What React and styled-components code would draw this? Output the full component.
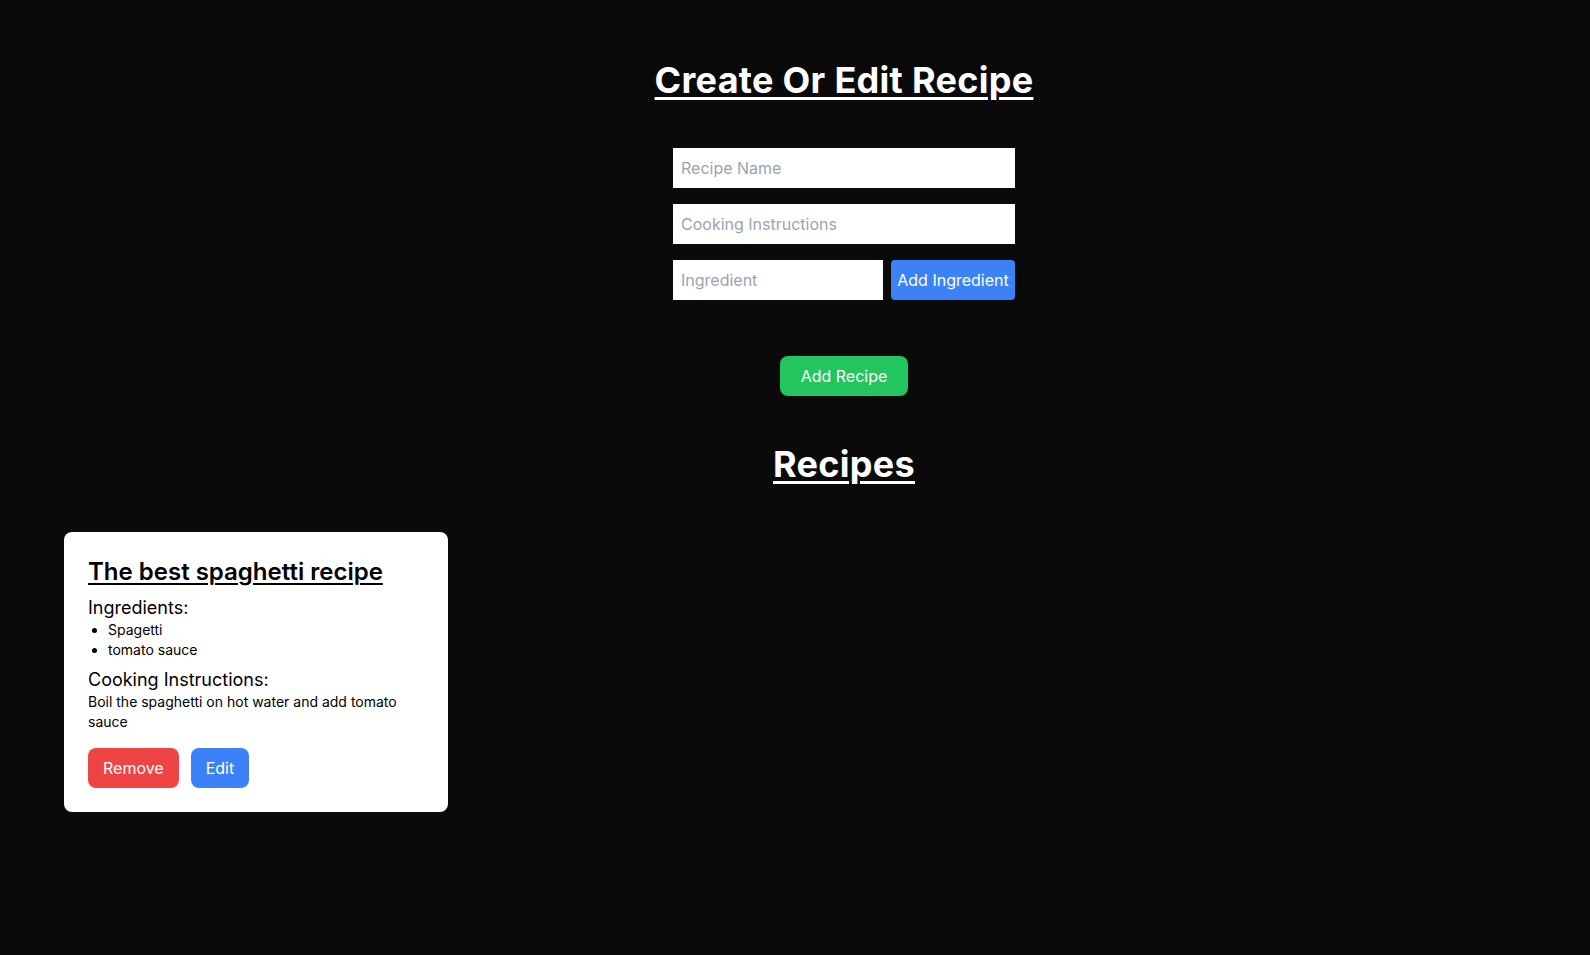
import styled, { createGlobalStyle } from "styled-components";

const GlobalStyle = createGlobalStyle`
  body {
    margin: 0;
    background-color: #0a0a0a;
    font-family: Inter, "Liberation Sans", sans-serif;
    color: #fff;
  }
  * {
    box-sizing: border-box;
  }
`;

const Page = styled.div`
  min-height: 955px;
  padding-top: 60px;
`;

const EditorSection = styled.section`
  display: flex;
  flex-direction: column;
  align-items: center;
  padding-left: 98px;
`;

const PageTitle = styled.h1`
  font-size: 36px;
  line-height: 40px;
  font-weight: 700;
  letter-spacing: 0.3px;
  text-decoration: underline;
  text-underline-offset: 4px;
  text-decoration-thickness: 3px;
  margin: 0;
`;

const Form = styled.div`
  width: 342px;
  margin-top: 48px;
  display: flex;
  flex-direction: column;
  gap: 16px;
`;

const Input = styled.input`
  height: 40px;
  width: ${(p) => p.$width || "100%"};
  flex-shrink: 0;
  border: none;
  outline: none;
  padding: 0 8px;
  font-family: inherit;
  font-size: 16px;
  color: #111;
  background: #fff;
  &::placeholder {
    color: #9ca3af;
  }
`;

const Row = styled.div`
  display: flex;
  gap: 8px;
`;

const Button = styled.button`
  height: 40px;
  border: none;
  color: #fff;
  font-family: inherit;
  font-size: 16px;
  padding: 0 ${(p) => p.$px ?? 15}px;
  border-radius: ${(p) => p.$radius || 8}px;
  background-color: ${(p) => p.$color || "#3b82f6"};
  cursor: pointer;
  white-space: nowrap;
`;

const AddIngredientButton = styled(Button)`
  flex: 1;
`;

const SubmitButton = styled(Button)`
  margin-top: 56px;
  width: 128px;
`;

const SectionTitle = styled(PageTitle)`
  margin-top: 48px;
`;

const RecipeGrid = styled.div`
  margin-top: 48px;
  padding: 0 64px;
  display: grid;
  grid-template-columns: repeat(auto-fill, 384px);
  gap: 24px;
`;

const Card = styled.div`
  background: #fff;
  color: #000;
  border-radius: 8px;
  padding: 24px;
`;

const CardTitle = styled.h2`
  font-size: 24px;
  line-height: 32px;
  font-weight: 600;
  text-decoration: underline;
  text-underline-offset: 3px;
  text-decoration-thickness: 2px;
  margin: 0 0 6px;
`;

const Label = styled.h3`
  font-size: 18px;
  line-height: 28px;
  font-weight: 400;
  margin: ${(p) => (p.$spaced ? "6px 0 -2px" : "0 0 -2px")};
`;

const List = styled.ul`
  margin: 0;
  padding-left: 20px;
  list-style: disc;
  font-size: 14px;
  line-height: 20px;
`;

const Text = styled.p`
  margin: 0;
  font-size: 14px;
  line-height: 20px;
`;

const Actions = styled.div`
  display: flex;
  gap: 12px;
  margin-top: 16px;
`;

const recipes = [
  {
    name: "The best spaghetti recipe",
    ingredients: ["Spagetti", "tomato sauce"],
    instructions: "Boil the spaghetti on hot water and add tomato sauce",
  },
];

export default function App() {
  return (
    <Page>
      <GlobalStyle />
      <EditorSection>
        <PageTitle>Create Or Edit Recipe</PageTitle>
        <Form>
          <Input placeholder="Recipe Name" />
          <Input placeholder="Cooking Instructions" />
          <Row>
            <Input placeholder="Ingredient" $width="210px" />
            <AddIngredientButton $radius={4} $px={0}>
              Add Ingredient
            </AddIngredientButton>
          </Row>
        </Form>
        <SubmitButton $color="#22c55e">Add Recipe</SubmitButton>
        <SectionTitle>Recipes</SectionTitle>
      </EditorSection>
      <RecipeGrid>
        {recipes.map((r) => (
          <Card key={r.name}>
            <CardTitle>{r.name}</CardTitle>
            <Label>Ingredients:</Label>
            <List>
              {r.ingredients.map((i) => (
                <li key={i}>{i}</li>
              ))}
            </List>
            <Label $spaced>Cooking Instructions:</Label>
            <Text>{r.instructions}</Text>
            <Actions>
              <Button $color="#ef4444">Remove</Button>
              <Button>Edit</Button>
            </Actions>
          </Card>
        ))}
      </RecipeGrid>
    </Page>
  );
}
